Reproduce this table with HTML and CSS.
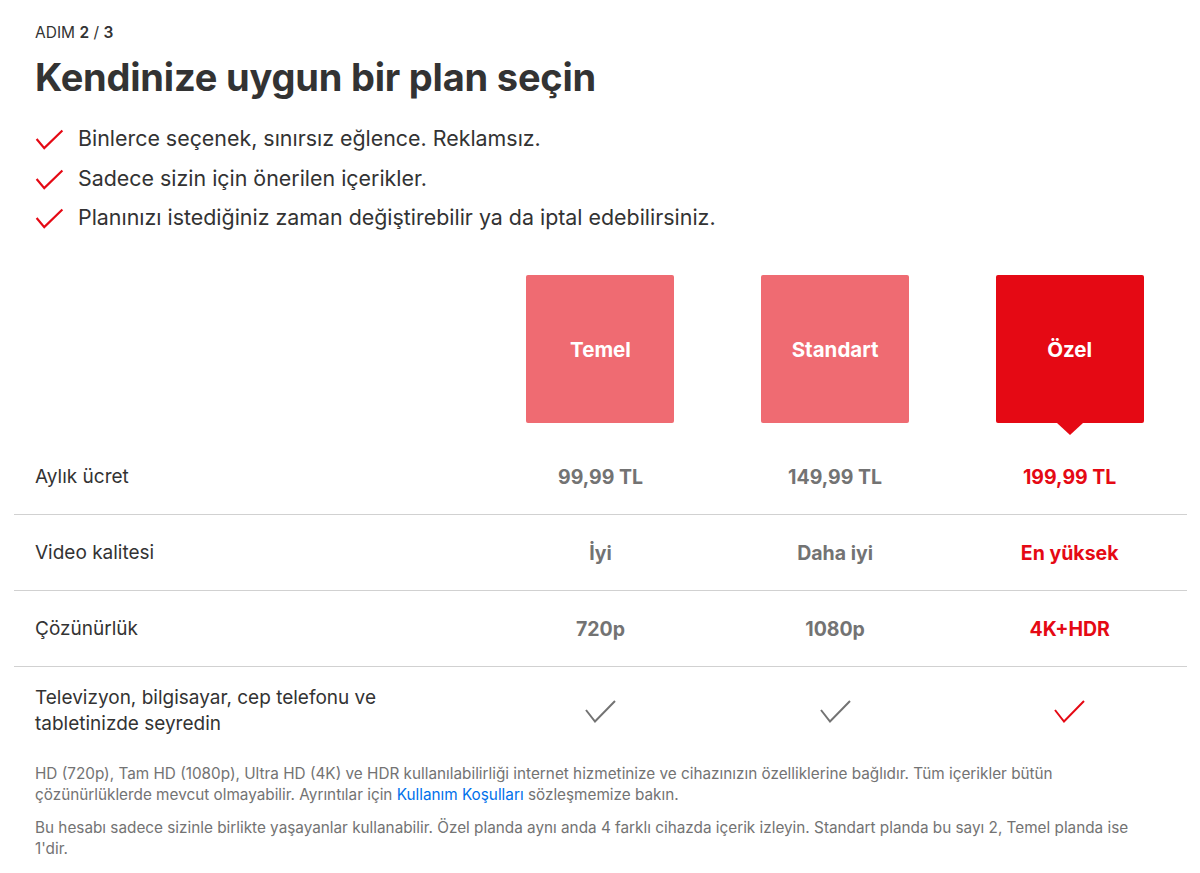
FILE: index.html
```html
<!DOCTYPE html>
<html lang="tr">
<head>
<meta charset="utf-8">
<title>Plan seçin</title>
<link rel="stylesheet" href="styles.css">
</head>
<body>
<main class="page">
  <header class="header">
    <div class="step">ADIM <b>2</b> / <b>3</b></div>
    <h1 class="title">Kendinize uygun bir plan seçin</h1>
    <ul class="perks">
      <li class="perk"><svg class="perk-check" viewBox="0 0 30 22" aria-hidden="true"><path d="M1.5 10.5 L9.5 20 L28.5 1.5" /></svg><span>Binlerce seçenek, sınırsız eğlence. Reklamsız.</span></li>
      <li class="perk"><svg class="perk-check" viewBox="0 0 30 22" aria-hidden="true"><path d="M1.5 10.5 L9.5 20 L28.5 1.5" /></svg><span>Sadece sizin için önerilen içerikler.</span></li>
      <li class="perk"><svg class="perk-check" viewBox="0 0 30 22" aria-hidden="true"><path d="M1.5 10.5 L9.5 20 L28.5 1.5" /></svg><span>Planınızı istediğiniz zaman değiştirebilir ya da iptal edebilirsiniz.</span></li>
    </ul>
  </header>

  <section class="plans">
    <div class="plan-row plan-head">
      <div class="cell label"></div>
      <div class="cell"><div class="plan-box">Temel</div></div>
      <div class="cell"><div class="plan-box">Standart</div></div>
      <div class="cell"><div class="plan-box selected">Özel</div></div>
    </div>

    <div class="plan-row">
      <div class="cell label">Aylık ücret</div>
      <div class="cell value">99,99 TL</div>
      <div class="cell value">149,99 TL</div>
      <div class="cell value selected">199,99 TL</div>
    </div>
    <div class="plan-row">
      <div class="cell label">Video kalitesi</div>
      <div class="cell value">İyi</div>
      <div class="cell value">Daha iyi</div>
      <div class="cell value selected">En yüksek</div>
    </div>
    <div class="plan-row">
      <div class="cell label">Çözünürlük</div>
      <div class="cell value">720p</div>
      <div class="cell value">1080p</div>
      <div class="cell value selected">4K+HDR</div>
    </div>
    <div class="plan-row last">
      <div class="cell label">Televizyon, bilgisayar, cep telefonu ve<br>tabletinizde seyredin</div>
      <div class="cell value"><svg class="tick" viewBox="0 0 31 23" aria-hidden="true"><path d="M1 10 L10 21.5 L30 1" /></svg></div>
      <div class="cell value"><svg class="tick" viewBox="0 0 31 23" aria-hidden="true"><path d="M1 10 L10 21.5 L30 1" /></svg></div>
      <div class="cell value selected"><svg class="tick" viewBox="0 0 31 23" aria-hidden="true"><path d="M1 10 L10 21.5 L30 1" /></svg></div>
    </div>
  </section>

  <footer class="notes">
    <p>HD (720p), Tam HD (1080p), Ultra HD (4K) ve HDR kullanılabilirliği internet hizmetinize ve cihazınızın özelliklerine bağlıdır. Tüm içerikler bütün çözünürlüklerde mevcut olmayabilir. Ayrıntılar için <a href="#">Kullanım Koşulları</a> sözleşmemize bakın.</p>
    <p>Bu hesabı sadece sizinle birlikte yaşayanlar kullanabilir. Özel planda aynı anda 4 farklı cihazda içerik izleyin. Standart planda bu sayı 2, Temel planda ise 1'dir.</p>
  </footer>
</main>
</body>
</html>
```

FILE: styles.css
```css
html, body {
  margin: 0;
  padding: 0;
  background: #fff;
}

body {
  font-family: Inter, "Liberation Sans", Arial, sans-serif;
  color: #333;
}

.page {
  padding: 24px 13px 0 14px;
}

.header {
  padding-left: 21px;
}

.step {
  font-size: 15.5px;
  line-height: 18px;
  color: #333;
}

.step b {
  font-weight: 600;
}

.title {
  margin: 13px 0 0;
  font-size: 38px;
  line-height: 44px;
  font-weight: 700;
  color: #333;
  letter-spacing: -0.2px;
}

.perks {
  list-style: none;
  margin: 26px 0 0;
  padding: 0;
  display: flex;
  flex-direction: column;
  gap: 13.5px;
}

.perk {
  display: flex;
  align-items: center;
  gap: 14px;
  font-size: 21.4px;
  line-height: 26px;
  color: #333;
}

.perk-check {
  width: 29px;
  height: 21px;
  flex: none;
  margin-top: 3px;
}

.perk-check path {
  fill: none;
  stroke: #e50914;
  stroke-width: 2.3;
}

.plans {
  margin-top: 45px;
}

.plan-row {
  display: grid;
  grid-template-columns: 40% 20% 20% 20%;
  height: 75px;
  border-bottom: 1px solid #d1d1d1;
}

.plan-row.plan-head {
  height: 148px;
  border-bottom: none;
  margin-bottom: 16px;
}

.plan-row.last {
  height: 88px;
  border-bottom: none;
}

.cell {
  display: flex;
  align-items: center;
  justify-content: center;
}

.cell.label {
  justify-content: flex-start;
  padding-left: 21px;
  font-size: 19px;
  line-height: 26px;
  color: #333;
}

.cell.value {
  font-size: 19.5px;
  font-weight: 700;
  color: #737373;
}

.cell.value.selected {
  color: #e50914;
}

.plan-box {
  position: relative;
  width: 148px;
  height: 148px;
  box-sizing: border-box;
  border-radius: 2px;
  background: #ef6b72;
  color: #fff;
  font-size: 20.5px;
  font-weight: 700;
  display: flex;
  align-items: center;
  justify-content: center;
}

.plan-box.selected {
  background: #e50914;
}

.plan-box.selected::after {
  content: "";
  position: absolute;
  left: 50%;
  top: 100%;
  transform: translateX(-50%);
  border-left: 13px solid transparent;
  border-right: 13px solid transparent;
  border-top: 12px solid #e50914;
}

.tick {
  width: 31px;
  height: 23px;
}

.tick path {
  fill: none;
  stroke: #737373;
  stroke-width: 2;
}

.selected .tick path {
  stroke: #e50914;
}

.notes {
  padding-left: 21px;
  padding-right: 30px;
  margin-top: 8px;
  font-size: 15.3px;
  line-height: 21px;
  color: #737373;
}

.notes p {
  margin: 0 0 12px;
}

.notes a {
  color: #0071eb;
  text-decoration: none;
}
```
